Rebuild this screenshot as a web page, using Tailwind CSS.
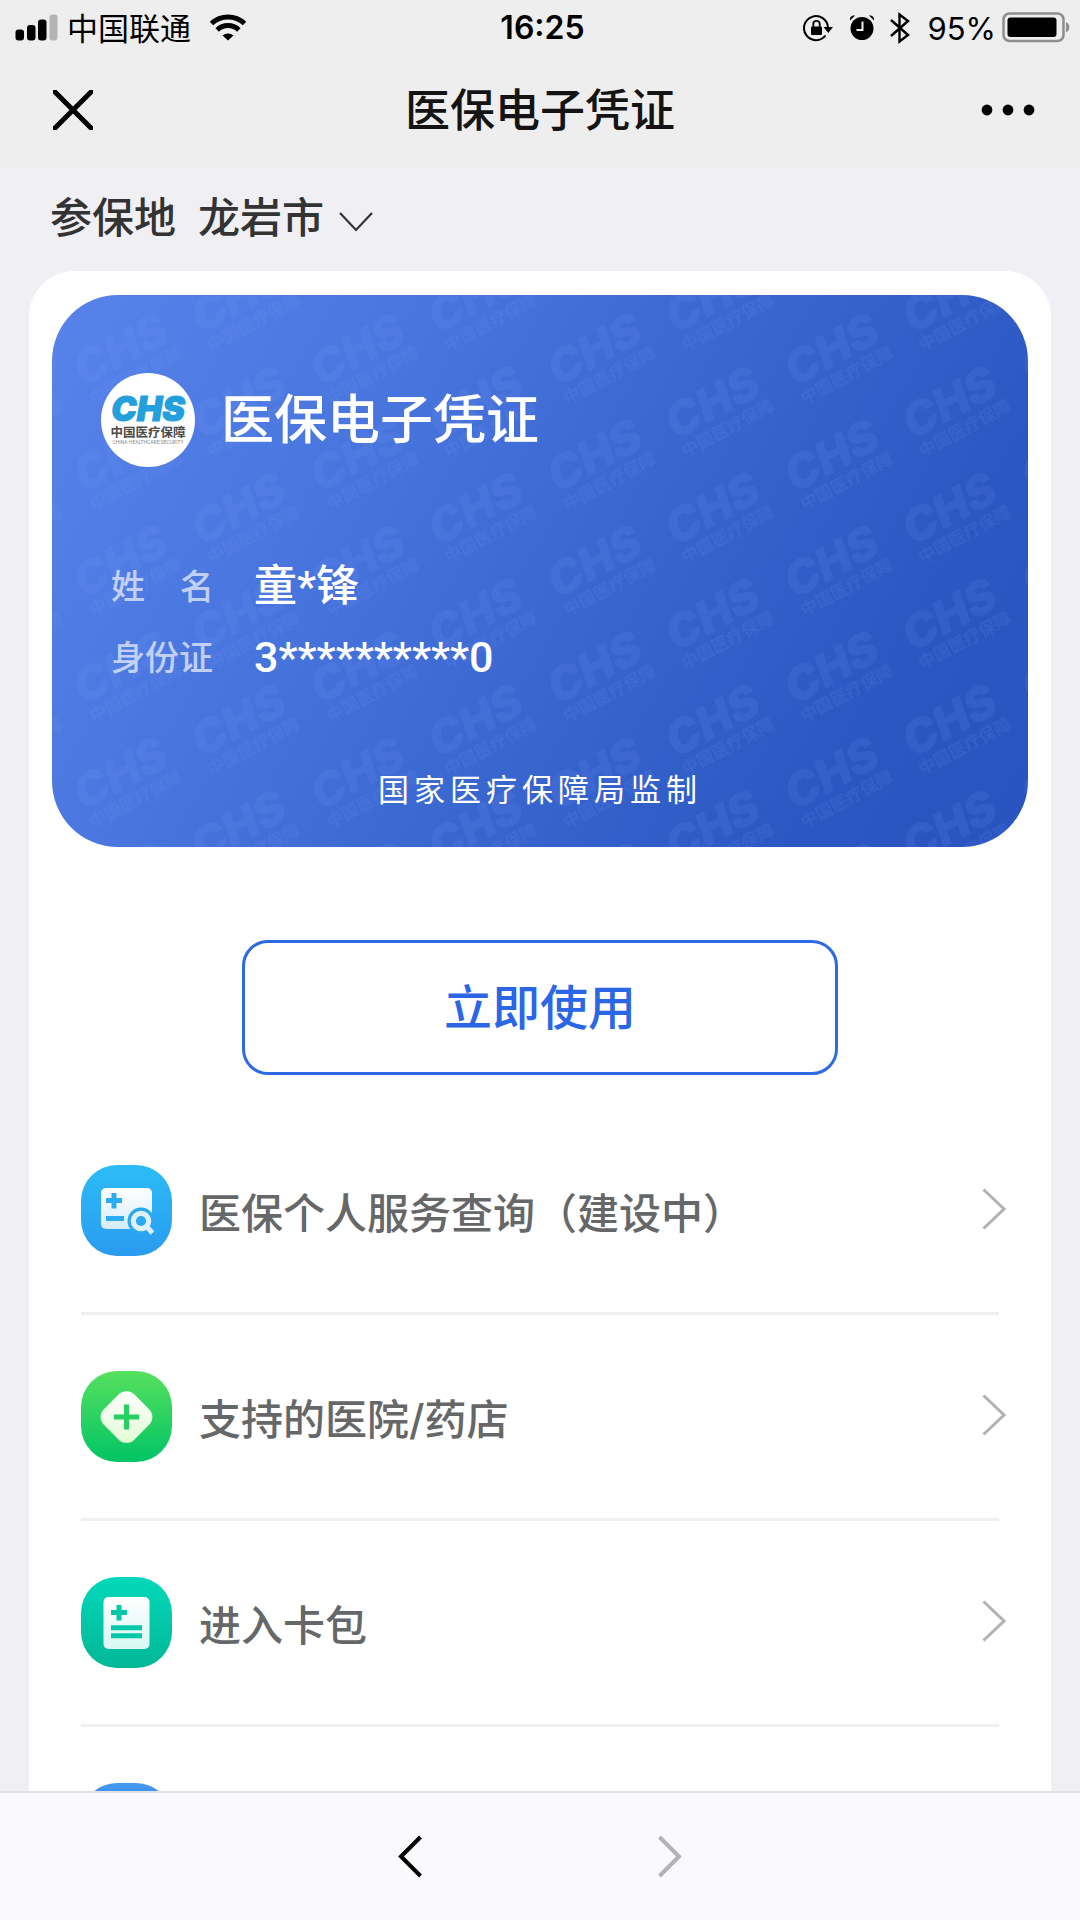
<!DOCTYPE html>
<html lang="zh-CN">
<head>
    <meta charset="UTF-8">
    <meta name="viewport" content="width=device-width, initial-scale=1.0">
    <title>医保电子凭证</title>
    <script src="https://cdn.jsdelivr.net/npm/@tailwindcss/browser@4"></script>
    <style>
        body { font-family: 'Inter', 'Noto Sans CJK SC', sans-serif; }
    </style>
</head>
<body class="bg-[#efeff4]">
<div class="flex flex-col h-screen">
    <!-- Status bar + title -->
    <header class="bg-[#eeeeee] pb-[3px] shrink-0">
        <div class="grid grid-cols-[1fr_auto_1fr] items-center h-14 pl-[15px] pr-[10px] text-black text-[31px] leading-none">
            <div class="flex items-center">
                <svg class="w-[44px] h-[28px]" viewBox="0 0 44 28">
                    <rect x="0.500" y="15.500" width="8.500" height="11" rx="3"/>
                    <rect x="12" y="11" width="8.500" height="15.500" rx="3"/>
                    <rect x="23" y="5.500" width="8.500" height="21" rx="3"/>
                    <rect x="34.500" y="0.500" width="8" height="26" rx="3" fill="#b4b4b4"/>
                </svg>
                <span class="ml-2">中国联通</span>
                <svg class="w-[38px] h-[28px] ml-[18px]" viewBox="0 0 38 28">
                    <g fill="none" stroke="#000" stroke-width="5">
                        <path d="M2.500 9.500a24 24 0 0 1 33 0"/>
                        <path d="M8.200 16a15.500 15.500 0 0 1 21.600 0"/>
                    </g>
                    <path d="M19 26.500l-5.500-5a8.500 8.500 0 0 1 11 0z"/>
                </svg>
            </div>
            <div class="text-[32px] font-semibold">16:25</div>
            <div class="flex items-center justify-end">
                <!-- rotation lock -->
                <svg class="w-[30px] h-[28px]" viewBox="0 0 30 28">
                    <path d="M22.500 21.500A12 12 0 1 1 25 13.500" fill="none" stroke="#000" stroke-width="2"/>
                    <path d="M20.500 13h9.500l-4.700 6z"/>
                    <rect x="8" y="12.500" width="11" height="8.500" rx="1.200"/>
                    <path d="M10.300 13V10a3.200 3.200 0 0 1 6.400 0v3" fill="none" stroke="#000" stroke-width="1.800"/>
                </svg>
                <!-- alarm -->
                <svg class="w-[26px] h-[28px] ml-4" viewBox="0 0 26 28">
                    <circle cx="13" cy="14.500" r="11.500"/>
                    <path d="M1 6.500C.5 3 3 1 6 1.500zM25 6.500C25.500 3 23 1 20 1.500z"/>
                    <path d="M13.500 7.500v8.500H7.500" fill="none" stroke="#eee" stroke-width="2"/>
                </svg>
                <!-- bluetooth -->
                <svg class="w-[20px] h-[32px] ml-[15px]" viewBox="0 0 20 32">
                    <path d="M1 8l17 15-8.500 6.500V2.500L18 9 1 24" fill="none" stroke="#000" stroke-width="2.400"/>
                </svg>
                <span class="ml-[17px]">95%</span>
                <svg class="w-[68px] h-[32px] ml-[6px]" viewBox="0 0 68 32">
                    <rect x="1.500" y="1.500" width="60" height="27.500" rx="6" fill="none" stroke="#8e8e90" stroke-width="2.500"/>
                    <rect x="5.500" y="5.500" width="49" height="19.500" rx="3"/>
                    <path d="M64 10c4.500 2 4.500 8.500 0 10.500z" fill="#8e8e90"/>
                </svg>
            </div>
        </div>
        <div class="grid grid-cols-[1fr_auto_1fr] items-center h-[108px] px-[45px]">
            <button type="button" aria-label="关闭" class="justify-self-start p-2">
                <svg class="w-[40px] h-[40px]" viewBox="0 0 40 40"><path d="M2 2l36 36M38 2l-36 36" stroke="#000" stroke-width="5" stroke-linecap="round"/></svg>
            </button>
            <h1 class="text-[45px] leading-none font-medium text-[#141414]">医保电子凭证</h1>
            <button type="button" aria-label="更多" class="justify-self-end">
                <svg class="w-[54px] h-[12px]" viewBox="0 0 54 12"><circle cx="6" cy="6" r="5.400"/><circle cx="27" cy="6" r="5.400"/><circle cx="48" cy="6" r="5.400"/></svg>
            </button>
        </div>
    </header>

    <main class="flex-1 min-h-0 overflow-hidden">
        <!-- Insured region -->
        <div class="flex items-center h-[102px] mb-[2px] px-[50px] text-[42px] leading-none font-medium text-[#333333]">
            <label for="region">参保地</label>
            <select id="region" class="appearance-none ml-[22px] leading-none">
                <option>龙岩市</option>
            </select>
            <svg class="w-[34px] h-[20px] ml-[14px] mt-2" viewBox="0 0 34 20"><path d="M1 1l16 17L33 1" fill="none" stroke="#333" stroke-width="2.200"/></svg>
        </div>

        <div class="mx-[29px] px-[23px] pt-6 bg-white rounded-t-[46px]">
            <!-- Certificate card -->
            <section class="relative overflow-hidden rounded-[66px] pt-[78px] pb-[33px] text-white bg-[linear-gradient(120deg,#5783eb_0%,#4a76df_28%,#3a66d0_55%,#2b57c3_82%,#2954c0_100%)]">
                <svg class="absolute inset-0 w-full h-full" aria-hidden="true">
                    <defs>
                        <pattern id="mark" width="237" height="106" patternUnits="userSpaceOnUse" patternTransform="translate(22 10)">
                            <g id="mark-a" fill="#7fa6ff" fill-opacity=".11">
                                <g transform="translate(10 82) rotate(-28)">
                                    <text font-family="Inter" font-size="46" font-weight="900" font-style="italic">CHS</text>
                                    <text y="20" font-family="Noto Sans CJK SC" font-size="17" font-weight="700">中国医疗保障</text>
                                </g>
                            </g>
                            <use href="#mark-a" y="-106"/>
                            <use href="#mark-a" y="106"/>
                            <use href="#mark-a" x="118" y="-53"/>
                            <use href="#mark-a" x="118" y="53"/>
                            <use href="#mark-a" x="-119" y="-53"/>
                            <use href="#mark-a" x="-119" y="53"/>
                        </pattern>
                    </defs>
                    <rect width="100%" height="100%" fill="url(#mark)"/>
                </svg>
                <div class="relative">
                    <div class="flex items-center pl-[49px]">
                        <svg class="w-[94px] h-[94px]" viewBox="0 0 94 94">
                            <circle cx="47" cy="47" r="47" fill="#fff"/>
                            <text x="47" y="48" text-anchor="middle" font-family="Inter" font-size="34" font-weight="900" font-style="italic" fill="#239fdc" stroke="#239fdc">CHS</text>
                            <text x="47" y="64" text-anchor="middle" font-family="Noto Sans CJK SC" font-size="12.500" font-weight="700" fill="#4a4a4a">中国医疗保障</text>
                            <text x="47" y="71" text-anchor="middle" font-family="Roboto" font-size="5" fill="#8a8a8a">CHINA HEALTHCARE SECURITY</text>
                        </svg>
                        <h2 class="ml-[26px] text-[53px] leading-none font-medium">医保电子凭证</h2>
                    </div>
                    <dl class="mt-[84px] pl-[59px] text-[43px] leading-none font-medium font-['Roboto','Noto_Sans_CJK_SC',sans-serif]">
                        <div class="flex items-center h-[71px]">
                            <dt class="flex justify-between w-[103px] mr-10 text-[34px] text-white/65"><span>姓</span><span>名</span></dt>
                            <dd>童*锋</dd>
                        </div>
                        <div class="flex items-center h-[71px]">
                            <dt class="w-[103px] mr-10 text-[34px] text-white/65">身份证</dt>
                            <dd>3**********0</dd>
                        </div>
                    </dl>
                    <p class="mt-[73px] text-center text-[31px] leading-[48px] tracking-[5px]">国家医疗保障局监制</p>
                </div>
            </section>

            <button type="button" class="block w-[61%] h-[135px] mt-[93px] mx-auto border-3 border-[#2e69e6] rounded-[26px] text-[48px] leading-none font-medium text-[#2a66e6]">立即使用</button>

            <!-- Services -->
            <ul class="mt-[34px] text-[42px] leading-none font-medium text-[#666769]">
                <li>
                    <a href="#" class="flex items-center h-[203px] pl-[29px] pr-[22px]">
                        <svg class="w-[91px] h-[91px]" viewBox="0 0 91 91">
                            <defs>
                                <linearGradient id="g1" x2="0" y2="1"><stop stop-color="#2cbcf6"/><stop offset="1" stop-color="#2a9bf0"/></linearGradient>
                                <linearGradient id="w1" x2="0" y2="1"><stop stop-color="#fff"/><stop offset="1" stop-color="#d6ecfd"/></linearGradient>
                            </defs>
                            <rect width="91" height="91" rx="36" fill="url(#g1)"/>
                            <rect x="20" y="23" width="51" height="41" rx="5" fill="url(#w1)"/>
                            <path d="M25 35.500h16M33 28v15.500M25 53.500h18" stroke="#2bacf3" stroke-width="5"/>
                            <circle cx="60" cy="56" r="13.500" fill="#2ba8f2"/>
                            <circle cx="60" cy="56" r="7.700" fill="none" stroke="#deeffd" stroke-width="5.200"/>
                            <path d="M65 61l6.500 7" stroke="#deeffd" stroke-width="5"/>
                        </svg>
                        <span class="flex-1 ml-[27px] mt-[6px]">医保个人服务查询（建设中）</span>
                        <svg class="w-[24px] h-[42px] mb-[3px]" viewBox="0 0 24 42"><path d="M1.500 1.500L22 21 1.500 40.500" fill="none" stroke="#b2b2b2" stroke-width="3"/></svg>
                    </a>
                    <hr class="mx-[29px] border-0 h-[3px] bg-[#f0f0f0]">
                </li>
                <li>
                    <a href="#" class="flex items-center h-[203px] pl-[29px] pr-[22px]">
                        <svg class="w-[91px] h-[91px]" viewBox="0 0 91 91">
                            <defs>
                                <linearGradient id="g2" x2="0" y2="1"><stop stop-color="#57e05e"/><stop offset="1" stop-color="#00c465"/></linearGradient>
                                <linearGradient id="w2" x2="1" y2="1"><stop stop-color="#fff"/><stop offset="1" stop-color="#dffcd2"/></linearGradient>
                            </defs>
                            <rect width="91" height="91" rx="36" fill="url(#g2)"/>
                            <rect x="24" y="24.500" width="43" height="43" rx="11" fill="url(#w2)" transform="rotate(45 45.500 46)"/>
                            <path d="M33 46h25M45.500 33.500v25" stroke="#27cf62" stroke-width="5"/>
                        </svg>
                        <span class="flex-1 ml-[27px] mt-[6px]">支持的医院/药店</span>
                        <svg class="w-[24px] h-[42px] mb-[3px]" viewBox="0 0 24 42"><path d="M1.500 1.500L22 21 1.500 40.500" fill="none" stroke="#b2b2b2" stroke-width="3"/></svg>
                    </a>
                    <hr class="mx-[29px] border-0 h-[3px] bg-[#f0f0f0]">
                </li>
                <li>
                    <a href="#" class="flex items-center h-[203px] pl-[29px] pr-[22px]">
                        <svg class="w-[91px] h-[91px]" viewBox="0 0 91 91">
                            <defs>
                                <linearGradient id="g3" x2="0" y2="1"><stop stop-color="#03d9bb"/><stop offset="1" stop-color="#02b796"/></linearGradient>
                                <linearGradient id="w3" x2="0" y2="1"><stop stop-color="#fff"/><stop offset="1" stop-color="#d8f7f2"/></linearGradient>
                            </defs>
                            <rect width="91" height="91" rx="36" fill="url(#g3)"/>
                            <rect x="22.500" y="20" width="46" height="52" rx="5" fill="url(#w3)"/>
                            <path d="M30 35.500h16M38 28v15.500M30 50.700h31M30 58.700h31" stroke="#03c8aa" stroke-width="5"/>
                        </svg>
                        <span class="flex-1 ml-[27px] mt-[6px]">进入卡包</span>
                        <svg class="w-[24px] h-[42px] mb-[3px]" viewBox="0 0 24 42"><path d="M1.500 1.500L22 21 1.500 40.500" fill="none" stroke="#b2b2b2" stroke-width="3"/></svg>
                    </a>
                    <hr class="mx-[29px] border-0 h-[3px] bg-[#f0f0f0]">
                </li>
                <li>
                    <div class="flex items-center h-[203px] pl-[29px] pr-[22px]">
                        <svg class="w-[91px] h-[91px]" viewBox="0 0 91 91">
                            <defs>
                                <linearGradient id="g4" x2="0" y2="1"><stop stop-color="#4398f0"/><stop offset="1" stop-color="#2a62d8"/></linearGradient>
                            </defs>
                            <rect width="91" height="91" rx="36" fill="url(#g4)"/>
                        </svg>
                    </div>
                </li>
            </ul>
        </div>
    </main>

    <!-- Browser navigation -->
    <nav class="flex justify-center items-center gap-[234px] h-[129px] shrink-0 bg-[#fafafc] border-t-2 border-[#e2e2e4]">
        <button type="button" aria-label="后退">
            <svg class="w-[25px] h-[43px]" viewBox="0 0 25 43"><path d="M22.500 2L3 21.500 22.500 41" fill="none" stroke="#000" stroke-width="4"/></svg>
        </button>
        <button type="button" aria-label="前进">
            <svg class="w-[25px] h-[43px]" viewBox="0 0 25 43"><path d="M2.500 2L22 21.500 2.500 41" fill="none" stroke="#b3b3b5" stroke-width="4"/></svg>
        </button>
    </nav>
</div>
</body>
</html>
